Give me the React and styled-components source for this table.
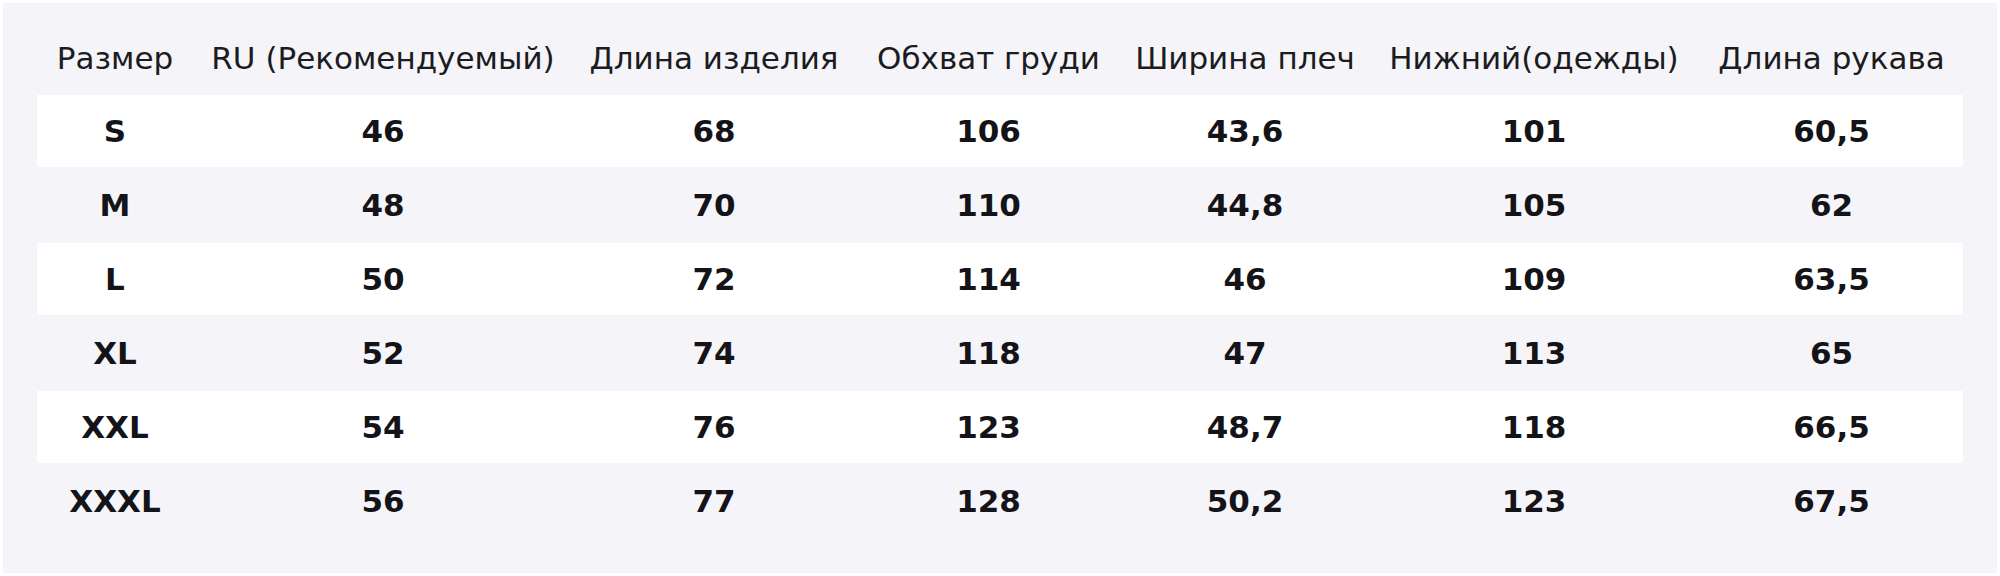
import React from 'react';
import styled, { createGlobalStyle } from 'styled-components';

const GlobalStyle = createGlobalStyle`
  html, body {
    margin: 0;
    background: #ffffff;
  }
  body {
    padding: 3px;
    font-family: 'DejaVu Sans', 'Noto Sans', sans-serif;
  }
`;

const Card = styled.div`
  background: #f4f4f9;
  padding: 34px;
  height: 570px;
  box-sizing: border-box;
`;

const Table = styled.table`
  width: 100%;
  table-layout: fixed;
  border-collapse: separate;
  border-spacing: 0 2px;
  color: #141418;
`;

const Col = styled.col`
  width: ${(p) => p.$w}px;
`;

const HeadCell = styled.th`
  font-size: 31px;
  line-height: 36px;
  font-weight: 400;
  padding: 1px 0 17px;
  text-align: center;
  white-space: nowrap;
  color: #1b1b20;
`;

const Row = styled.tr`
  background: ${(p) => (p.$striped ? '#ffffff' : 'transparent')};
`;

const Cell = styled.td`
  height: 72px;
  padding: 0;
  box-sizing: border-box;
  font-size: 31px;
  line-height: 36px;
  font-weight: 700;
  text-align: center;
  white-space: nowrap;
`;

const columns = [
  { title: 'Размер', width: 156 },
  { title: 'RU (Рекомендуемый)', width: 380 },
  { title: 'Длина изделия', width: 282 },
  { title: 'Обхват груди', width: 267 },
  { title: 'Ширина плеч', width: 246 },
  { title: 'Нижний(одежды)', width: 332 },
  { title: 'Длина рукава', width: 263 },
];

const rows = [
  ['S', '46', '68', '106', '43,6', '101', '60,5'],
  ['M', '48', '70', '110', '44,8', '105', '62'],
  ['L', '50', '72', '114', '46', '109', '63,5'],
  ['XL', '52', '74', '118', '47', '113', '65'],
  ['XXL', '54', '76', '123', '48,7', '118', '66,5'],
  ['XXXL', '56', '77', '128', '50,2', '123', '67,5'],
];

export default function App() {
  return (
    <>
      <GlobalStyle />
      <Card>
        <Table>
          <colgroup>
            {columns.map((c) => (
              <Col key={c.title} $w={c.width} />
            ))}
          </colgroup>
          <thead>
            <tr>
              {columns.map((c) => (
                <HeadCell key={c.title}>{c.title}</HeadCell>
              ))}
            </tr>
          </thead>
          <tbody>
            {rows.map((r, i) => (
              <Row key={r[0]} $striped={i % 2 === 0}>
                {r.map((v, j) => (
                  <Cell key={j}>{v}</Cell>
                ))}
              </Row>
            ))}
          </tbody>
        </Table>
      </Card>
    </>
  );
}
